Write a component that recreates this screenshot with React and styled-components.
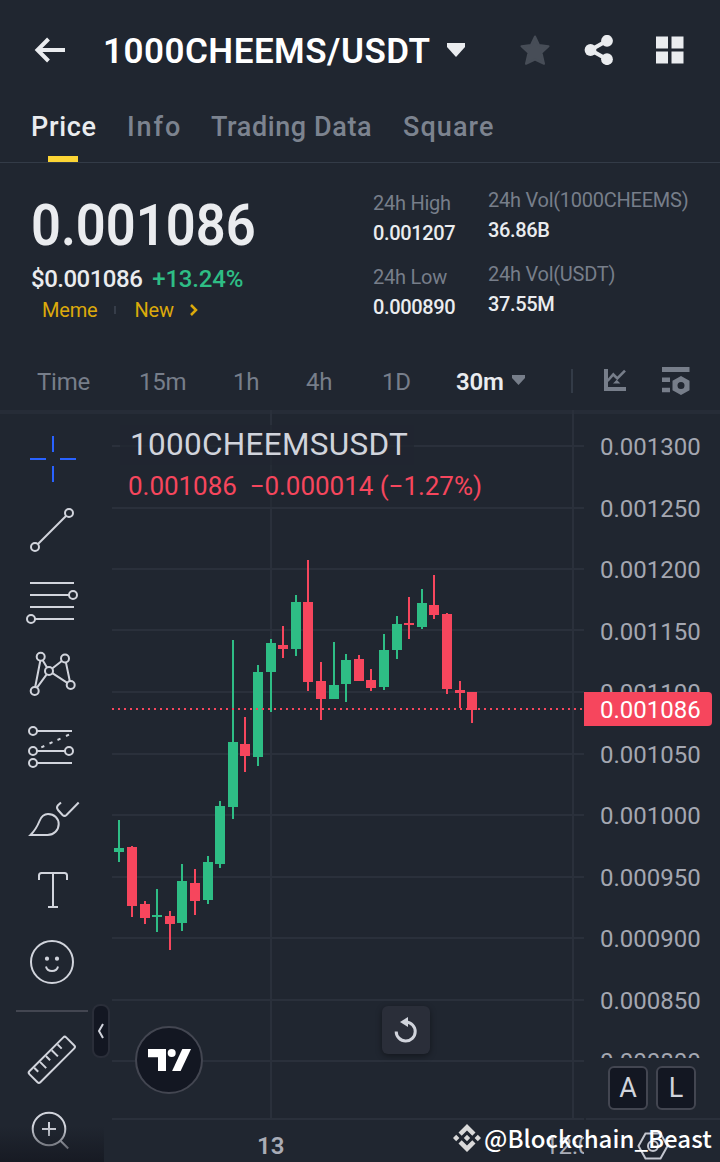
import React, { useState } from 'react';
import styled, { createGlobalStyle } from 'styled-components';

const GlobalStyle = createGlobalStyle`
  * {
    box-sizing: border-box;
  }
  body {
    margin: 0;
    background: #202630;
    font-family: Roboto, 'Liberation Sans', sans-serif;
  }
  svg {
    display: block;
  }
`;

const Page = styled.div`
  position: relative;
  width: 720px;
  height: 1162px;
  overflow: hidden;
  display: flex;
  flex-direction: column;
  background: #202630;
  color: #eaecef;
`;

const Header = styled.header`
  display: flex;
  align-items: center;
  height: 100px;
  padding: 0 36px 0 34px;
`;

const Pair = styled.h1`
  margin: 0 0 0 37px;
  width: 344px;
  font-size: 35px;
  line-height: 40px;
  font-weight: 600;
  color: #fff;
  white-space: nowrap;
  padding-top: 3px;
  letter-spacing: 0.5px;
`;

const HeaderIcons = styled.div`
  margin-left: auto;
  display: flex;
  align-items: center;
  gap: 34px;
`;

const Tabs = styled.nav`
  display: flex;
  height: 63px;
  padding-left: 31px;
  border-bottom: 1px solid #333b47;
`;

const Tab = styled.button`
  width: ${(p) => p.$width}px;
  padding: 9px 0 0;
  border: none;
  background: none;
  font: 500 27px/36px 'Roboto', sans-serif;
  letter-spacing: ${(p) => p.$spacing}px;
  text-align: left;
  white-space: nowrap;
  color: ${(p) => (p.$active ? '#eaecef' : '#7c838f')};
  display: flex;
  flex-direction: column;
  justify-content: space-between;
`;

const Underline = styled.i`
  width: 30px;
  height: 6px;
  margin-left: 17px;
  background: #fcd535;
`;

const Summary = styled.section`
  display: flex;
  height: 187px;
  padding-left: 31px;
`;

const PriceBlock = styled.div`
  width: 342px;
  padding-top: 29px;
`;

const BigPrice = styled.div`
  font-size: 57px;
  line-height: 68px;
  font-weight: 600;
  transform: scaleX(0.92);
  transform-origin: left;
`;

const SubPrice = styled.div`
  display: flex;
  gap: 10px;
  margin-top: 5px;
  font-size: 24px;
  line-height: 28px;
  font-weight: 500;
  letter-spacing: -0.5px;
`;

const Up = styled.span`
  color: #2ebd85;
  letter-spacing: -0.2px;
`;

const Tags = styled.div`
  display: flex;
  align-items: center;
  padding-left: 11px;
  margin-top: 4px;
  height: 26px;
  font-size: 20px;
  letter-spacing: -0.2px;
  color: #dcaa0b;

  i {
    width: 2px;
    height: 8px;
    margin: 0 18px 0 17px;
    background: #363d49;
  }
  svg {
    margin-left: 16px;
  }
`;

const StatColumn = styled.div`
  width: ${(p) => p.$width}px;
  padding-top: ${(p) => p.$top}px;
`;

const Stat = styled.div`
  height: 74px;
  font-size: 20px;
  line-height: 29px;
  white-space: nowrap;
`;

const StatLabel = styled.div`
  color: #777e8a;
  letter-spacing: -0.25px;
`;

const StatValue = styled.div`
  padding-top: 1px;
  font-weight: 500;
  letter-spacing: -0.35px;
`;

const Intervals = styled.div`
  display: flex;
  align-items: center;
  height: 60px;
  padding-left: 37px;
  padding-top: 2px;
`;

const Interval = styled.span`
  width: ${(p) => p.$width}px;
  padding-top: 2px;
  font-size: 24px;
  letter-spacing: -0.2px;
  font-weight: ${(p) => (p.$active ? 600 : 400)};
  color: ${(p) => (p.$active ? '#eaecef' : '#777e8a')};
  white-space: nowrap;
`;

const Divider = styled.i`
  width: 2px;
  height: 24px;
  margin: 0 31px 0 46px;
  background: #333b47;
`;

const Workspace = styled.main`
  display: flex;
  height: 752px;
  border-top: 4px solid #262c37;
`;

const Toolbar = styled.aside`
  position: relative;
  width: 104px;
  padding: 9px 16px 0;
  overflow: hidden;

  &::after {
    content: '';
    position: absolute;
    left: 0;
    right: 0;
    bottom: 0;
    height: 36px;
    background: linear-gradient(rgba(22, 25, 34, 0), rgba(22, 25, 34, 0.9));
  }
`;

const Tool = styled.svg`
  width: 72px;
  height: 72px;
  fill: none;
  stroke: ${(p) => (p.$active ? '#2962ff' : '#d1d4dc')};
  stroke-width: 2;
`;

const ToolDivider = styled.div`
  height: 2px;
  margin: 11px 0 12px;
  background: #434651;
`;

const Pane = styled.div`
  position: relative;
  width: 480px;
  display: flex;
  flex-direction: column;
`;

const Chart = styled.svg`
  width: 480px;
  height: 710px;
  margin-top: -4px;
`;

const Legend = styled.div`
  position: absolute;
  left: 16px;
  top: 11px;
  width: 364px;
`;

const Symbol = styled.div`
  width: 294px;
  padding-left: 10px;
  font-size: 31.5px;
  line-height: 40px;
  letter-spacing: 0.3px;
  color: #d1d4dc;
  background: rgba(32, 38, 48, 0.75);
`;

const Change = styled.div`
  padding-left: 8px;
  font-size: 26px;
  line-height: 42px;
  letter-spacing: -0.04px;
  color: #f6465d;
  white-space: pre;
  background: rgba(32, 38, 48, 0.5);
`;

const Collapse = styled.button`
  position: absolute;
  left: -12px;
  top: 590px;
  width: 18px;
  height: 54px;
  padding: 0;
  display: grid;
  place-items: center;
  border: 2px solid #2a2e39;
  border-radius: 8px;
  background: #131722;
`;

const TvBadge = styled.div`
  position: absolute;
  left: 31px;
  top: 612px;
  width: 68px;
  height: 68px;
  display: grid;
  place-items: center;
  border: 2px solid #434651;
  border-radius: 50%;
  background: #131722;
`;

const ResetButton = styled.button`
  position: absolute;
  left: 278px;
  top: 592px;
  width: 48px;
  height: 48px;
  padding: 0;
  display: grid;
  place-items: center;
  border: none;
  border-radius: 6px;
  background: #2a2e39;
  box-shadow: 0 2px 6px rgba(0, 0, 0, 0.4);
`;

const TimeAxis = styled.div`
  display: flex;
  overflow: hidden;
  height: 42px;
  padding-left: 153px;
  font-size: 24px;
  line-height: 53px;
  white-space: nowrap;
  color: #a9acb6;

  b {
    flex: 0 0 288px;
    font-weight: 600;
  }
`;

const PriceAxis = styled.div`
  position: relative;
  width: 136px;
`;

const Scale = styled.div`
  height: 644px;
  overflow: hidden;
  padding: 3px 0 0 16px;
  font-size: 24px;
  color: #a4a7b1;

  div {
    height: 61.5px;
    line-height: 61.5px;
  }
`;

const LastPrice = styled.div`
  position: absolute;
  left: 0;
  top: 278px;
  width: 128px;
  height: 34px;
  padding-left: 16px;
  border-radius: 0 4px 4px 0;
  background: #f6465d;
  color: #fff;
  font-size: 24px;
  line-height: 36px;
`;

const ScaleButtons = styled.div`
  display: flex;
  gap: 8px;
  height: 60px;
  padding: 8px 0 0 24px;
`;

const ScaleButton = styled.button`
  width: 40px;
  height: 44px;
  padding: 0;
  border: 2px solid #434651;
  border-radius: 6px;
  background: #131722;
  color: #d1d4dc;
  font: 400 27px/38px Roboto, sans-serif;
`;

const AxisFooter = styled.div`
  height: 44px;
  margin-left: 2px;
  padding: 12px 0 0 51px;
  border-top: 2px solid #2a303b;
`;

const Watermark = styled.div`
  position: absolute;
  left: 453px;
  top: 1120px;
  display: flex;
  align-items: center;
  gap: 3px;
  font: 500 24px/36px 'Noto Sans CJK SC', sans-serif;
  letter-spacing: 0.05px;
  color: #fff;
  white-space: nowrap;
`;

const tabs = [
  { name: 'Price', width: 96, spacing: 0.7 },
  { name: 'Info', width: 84, spacing: 1.9 },
  { name: 'Trading Data', width: 192, spacing: 0.6 },
  { name: 'Square', width: 120, spacing: 1.1 },
];

const intervals = [
  { name: 'Time', width: 102 },
  { name: '15m', width: 94 },
  { name: '1h', width: 73 },
  { name: '4h', width: 76 },
  { name: '1D', width: 74 },
];

const prices = [
  '0.001300', '0.001250', '0.001200', '0.001150', '0.001100', '0.001050',
  '0.001000', '0.000950', '0.000900', '0.000850', '0.000800',
];

const gridRows = [446, 508, 569, 630, 692, 754, 815, 877, 938, 1000, 1061];

// left, body top, body bottom, wick top, wick bottom, rising
const candles = [
  [114, 848, 852, 820, 862, 1],
  [127, 847, 906, 846, 917, 0],
  [140, 904, 918, 901, 924, 0],
  [152, 915, 917, 889, 932, 1],
  [165, 916, 924, 911, 950, 0],
  [177, 881, 923, 864, 931, 1],
  [190, 883, 901, 869, 915, 0],
  [203, 862, 900, 856, 904, 1],
  [215, 806, 864, 801, 868, 1],
  [228, 742, 807, 640, 819, 1],
  [240, 744, 756, 717, 772, 0],
  [253, 672, 757, 665, 766, 1],
  [266, 643, 672, 639, 712, 1],
  [278, 645, 649, 626, 658, 0],
  [291, 602, 649, 595, 656, 1],
  [303, 602, 682, 560, 691, 0],
  [316, 681, 699, 662, 720, 0],
  [329, 685, 699, 642, 699, 1],
  [341, 660, 684, 654, 702, 1],
  [354, 659, 681, 655, 681, 0],
  [366, 680, 688, 669, 691, 0],
  [379, 650, 687, 634, 690, 1],
  [392, 624, 650, 616, 659, 1],
  [404, 623, 625, 597, 639, 0],
  [417, 603, 627, 589, 629, 1],
  [429, 605, 615, 575, 619, 0],
  [442, 614, 689, 613, 694, 0],
  [455, 690, 693, 681, 708, 0],
  [467, 692, 710, 692, 723, 0],
];

const CandleChart = () => (
  <Chart viewBox="104 410 480 710" shapeRendering="crispEdges">
    <g fill="#2a303b">
      {gridRows.map((y) => (
        <rect key={y} x="112" y={y - 1} width="472" height="2" />
      ))}
      <rect x="270" y="410" width="2" height="708" />
      <rect x="572" y="410" width="2" height="708" />
      <rect x="112" y="1118" width="472" height="2" />
    </g>
    {candles.map(([x, top, bottom, high, low, up]) => (
      <g key={x} fill={up ? '#2ebd85' : '#f6465d'}>
        <rect x={x + 4} y={high} width="2" height={low - high} />
        <rect x={x} y={top} width="10" height={bottom - top} />
      </g>
    ))}
    <line x1="112" x2="584" y1="709" y2="709" stroke="#f6465d" strokeWidth="2" strokeDasharray="2 4" />
  </Chart>
);

const Tools = () => (
  <Toolbar>
    <Tool viewBox="0 0 72 72" $active>
      <path d="M37 13v16M37 43v16M14 36h16M44 36h16" />
    </Tool>
    <Tool viewBox="0 0 72 72">
      <circle cx="53" cy="18" r="4" />
      <circle cx="19" cy="52" r="4" />
      <path d="M22 49L50 21" />
    </Tool>
    <Tool viewBox="0 0 72 72">
      <path d="M14 16h44M14 28h39M14 40h44M19 52h39" />
      <circle cx="57" cy="28" r="4" />
      <circle cx="15" cy="52" r="4" />
    </Tool>
    <Tool viewBox="0 0 72 72">
      <circle cx="24.7" cy="17.7" r="4" />
      <circle cx="49" cy="19.5" r="4" />
      <circle cx="33" cy="32" r="4" />
      <circle cx="18.7" cy="52" r="4" />
      <circle cx="54.7" cy="46" r="4" />
      <path d="M26.7 21.2L31 28.5M36.2 29.5L45.8 22M49.9 23.4L53.8 42M36.4 34.2L51.3 43.8M24.3 21.7L19.2 48M21 48.7L30.7 35.3" />
    </Tool>
    <Tool viewBox="0 0 72 72">
      <circle cx="17" cy="20" r="4" />
      <circle cx="17" cy="40" r="4" />
      <circle cx="53" cy="40" r="4" />
      <circle cx="17" cy="52" r="4" />
      <path d="M21 20h35M21 40h28M21 52h35" />
      <path d="M25.3 36.3l3-1.3M33.5 32.5l3-1.3M41.5 29l3-1.3M50 25l3-1.3" />
    </Tool>
    <Tool viewBox="0 0 72 72">
      <path d="M14.5 52C19.5 47 21.5 43 23.500 38C25.500 33 28 31 32 31C38.500 31 42.700 35.500 42.700 41C42.700 47 38 52 31.500 52Z" />
      <path d="M45 19.500L42 22.200Q40 24.500 42 27L46.500 32Q48.500 33.800 50.500 32L62.700 19.500" />
    </Tool>
    <Tool viewBox="0 0 72 72">
      <path d="M23 25v-4.500q0-2.500 2.500-2.500h23q2.500 0 2.500 2.500V25M37 18v34M32 52h10" />
    </Tool>
    <Tool viewBox="0 0 72 72">
      <circle cx="36" cy="35" r="21" />
      <path d="M30 39.500q1 4.500 6 4.500t6-4.500" />
      <circle cx="31" cy="31.700" r="1.100" />
      <circle cx="41" cy="31.700" r="1.100" />
    </Tool>
    <ToolDivider />
    <Tool viewBox="0 0 72 72">
      <rect x="10" y="28" width="52" height="15.500" rx="2" transform="rotate(-45 36 36)" />
      <path d="M18.200 43.700l4 4M24 37.900l6.200 6.200M29.900 32l4.200 4.200M35.700 26.200l6.200 6.200M41.500 20.400l4.200 4.200" />
    </Tool>
    <Tool viewBox="0 0 72 72">
      <circle cx="33" cy="33" r="16.300" />
      <path d="M33 26v14M26 33h14M44.700 45l7.500 7.500" />
    </Tool>
  </Toolbar>
);

const App = () => {
  const [tab, setTab] = useState('Price');
  const [interval, setActiveInterval] = useState('30m');

  return (
    <>
      <GlobalStyle />
      <Page>
        <Header>
          <svg width="32" height="26" viewBox="0 0 32 26" fill="none" stroke="#eaecef" strokeWidth="4">
            <path d="M3 13h28M14.500 2L3.500 13l11 11" />
          </svg>
          <Pair>1000CHEEMS/USDT</Pair>
          <svg width="18" height="14" viewBox="0 0 18 14" fill="#eaecef">
            <path d="M0 0h18v4L9 14 0 4z" />
          </svg>
          <HeaderIcons>
            <svg width="30" height="30" viewBox="0 0 30 30" fill="#474d57" stroke="#474d57" strokeWidth="2" strokeLinejoin="round">
              <path d="M15 1.500l4 8.500 9.500 1.300-7 6.500 2.500 11L15 24.500 6 28.800l2.500-11-7-6.500L11 10z" />
            </svg>
            <svg width="30" height="30" viewBox="0 0 30 30" fill="#eaecef">
              <circle cx="23" cy="5.800" r="5.900" />
              <circle cx="6.500" cy="15" r="5.900" />
              <circle cx="23" cy="24.200" r="5.900" />
              <path d="M23 5.800L6.500 15 23 24.200" fill="none" stroke="#eaecef" strokeWidth="4" />
            </svg>
            <svg width="36" height="28" viewBox="-8 0 36 28" fill="#eaecef">
              <path d="M0 0.500h12v12H0zM15.500 0.500h12v12h-12zM0 15.500h12v12H0zM15.500 15.500h12v12h-12z" />
            </svg>
          </HeaderIcons>
        </Header>

        <Tabs>
          {tabs.map((t) => (
            <Tab
              key={t.name}
              $width={t.width}
              $spacing={t.spacing}
              $active={tab === t.name}
              onClick={() => setTab(t.name)}
            >
              {t.name}
              {tab === t.name && <Underline />}
            </Tab>
          ))}
        </Tabs>

        <Summary>
          <PriceBlock>
            <BigPrice>0.001086</BigPrice>
            <SubPrice>
              <span>$0.001086</span>
              <Up>+13.24%</Up>
            </SubPrice>
            <Tags>
              Meme
              <i />
              New
              <svg width="8" height="12" viewBox="0 0 8 12" fill="none" stroke="#dcaa0b" strokeWidth="2.500">
                <path d="M1 1l5 5-5 5" />
              </svg>
            </Tags>
          </PriceBlock>
          <StatColumn $width={115} $top={26}>
            <Stat>
              <StatLabel>24h High</StatLabel>
              <StatValue>0.001207</StatValue>
            </Stat>
            <Stat>
              <StatLabel>24h Low</StatLabel>
              <StatValue>0.000890</StatValue>
            </Stat>
          </StatColumn>
          <StatColumn $width={220} $top={23}>
            <Stat>
              <StatLabel>24h Vol(1000CHEEMS)</StatLabel>
              <StatValue>36.86B</StatValue>
            </Stat>
            <Stat>
              <StatLabel>24h Vol(USDT)</StatLabel>
              <StatValue>37.55M</StatValue>
            </Stat>
          </StatColumn>
        </Summary>

        <Intervals>
          {intervals.map((i) => (
            <Interval
              key={i.name}
              $width={i.width}
              $active={interval === i.name}
              onClick={() => setActiveInterval(i.name)}
            >
              {i.name}
            </Interval>
          ))}
          <Interval $width={56} $active={interval === '30m'} onClick={() => setActiveInterval('30m')}>
            30m
          </Interval>
          <svg width="13" height="14" viewBox="0 0 13 14" fill="#777e8a">
            <path d="M0 1h13v3L6.500 11 0 4z" />
          </svg>
          <Divider />
          <svg width="22" height="24" viewBox="0 0 22 24" fill="#777e8a">
            <path d="M0 0h4v18h18v4H0zM9 14.500l3.700-3.700 3.700 3.700z" />
            <path d="M3.500 12L9.300 5.500l4 4L21 1.700" fill="none" stroke="#777e8a" strokeWidth="2.600" />
          </svg>
          <svg width="64" height="28" viewBox="-36 0 64 28" fill="#777e8a">
            <path d="M0 0h27.500v5H0zM0 10.500h8v4.500H0zM0 20.700h8v4.600H0z" />
            <path fillRule="evenodd" d="M19 9l8.500 4.800v9.400L19 28l-8.500-4.800v-9.400zM19 15a3.500 3.500 0 1 0 0 7 3.500 3.500 0 0 0 0-7z" />
          </svg>
        </Intervals>

        <Workspace>
          <Tools />
          <Pane>
            <CandleChart />
            <Legend>
              <Symbol>1000CHEEMSUSDT</Symbol>
              <Change>{'0.001086  −0.000014 (−1.27%)'}</Change>
            </Legend>
            <Collapse>
              <svg width="6" height="16" viewBox="0 0 6 16" fill="none" stroke="#d1d4dc" strokeWidth="2">
                <path d="M5 1L1 8l4 7" />
              </svg>
            </Collapse>
            <TvBadge>
              <svg width="43" height="22" viewBox="0 0 43 22" fill="#fff">
                <path d="M0 0h18v22h-8V8.300H0z" />
                <circle cx="23.700" cy="4" r="4" />
                <path d="M34.300 0h8.700l-10.400 22h-8.500z" />
              </svg>
            </TvBadge>
            <ResetButton>
              <svg width="24" height="26" viewBox="0 0 24 26">
                <path d="M2.200 14.500A9.500 9.500 0 1 0 12 5" fill="none" stroke="#d1d4dc" strokeWidth="3" />
                <path d="M6 5L14 0v10z" fill="#d1d4dc" />
              </svg>
            </ResetButton>
            <TimeAxis>
              <b>13</b>
              <span>12:00</span>
            </TimeAxis>
          </Pane>
          <PriceAxis>
            <Scale>
              {prices.map((p) => (
                <div key={p}>{p}</div>
              ))}
            </Scale>
            <LastPrice>0.001086</LastPrice>
            <ScaleButtons>
              <ScaleButton>A</ScaleButton>
              <ScaleButton>L</ScaleButton>
            </ScaleButtons>
            <AxisFooter>
              <svg width="32" height="28" viewBox="0 0 32 28" fill="none" stroke="#c3c6cf" strokeWidth="2">
                <path d="M8.500 1.500h15L30.500 14l-7 12.500h-15L1.500 14z" />
                <circle cx="16" cy="14" r="5" />
              </svg>
            </AxisFooter>
          </PriceAxis>
        </Workspace>

        <Watermark>
          <svg width="28" height="28" viewBox="0 0 28 28" fill="#d9d9d9">
            <path d="M14 0l8.500 8.500-3.200 3.200L14 6.400l-5.300 5.300-3.200-3.200zM14 28l8.500-8.500-3.200-3.200-5.300 5.300-5.300-5.300-3.200 3.200zM3.200 10.800L6.400 14l-3.200 3.200L0 14zM24.800 10.800L28 14l-3.200 3.200-3.200-3.200zM14 10.800l3.200 3.200-3.200 3.200-3.200-3.200z" />
          </svg>
          @Blockchain_Beast
        </Watermark>
      </Page>
    </>
  );
};

export default App;
